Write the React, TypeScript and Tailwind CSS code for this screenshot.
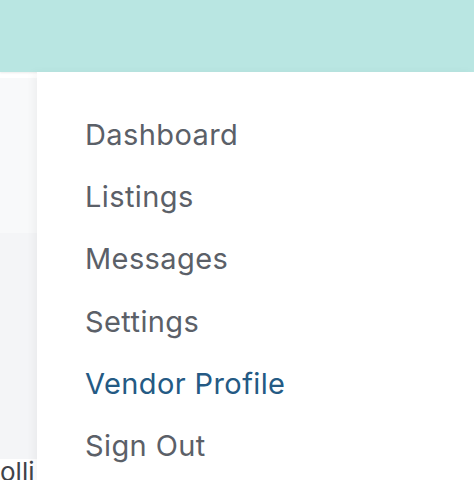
import React from "react";

function App() {
  const links = [
    { name: "Dashboard", active: false },
    { name: "Listings", active: false },
    { name: "Messages", active: false },
    { name: "Settings", active: false },
    { name: "Vendor Profile", active: true },
    { name: "Sign Out", active: false },
  ];

  return (
    <div className="relative h-[480px] w-[474px] overflow-hidden bg-white font-['Inter',sans-serif]">
      <header className="h-[72px] bg-[#b9e6e2] shadow-[0_1px_2px_rgba(0,0,0,0.08)]" />
      <div className="flex">
        {/* page behind the menu */}
        <div className="flex w-[37px] flex-col pt-[6px]">
          <div className="h-[155px] bg-[#f8f9fa]" />
          <div className="h-[226px] bg-[#f4f5f7]" />
          <p className="text-[26px] leading-none text-[#3f4349]">olli</p>
        </div>
        <nav className="flex flex-1 flex-col bg-white pl-[48px] pt-[32px] shadow-[-4px_0_8px_rgba(0,0,0,0.04)]">
          {links.map((link) => (
            <a
              key={link.name}
              href="#"
              className={`h-[62.2px] text-[29px] leading-[62px] tracking-[0.4px] ${
                link.active ? "text-[#245a84]" : "text-[#5b6068]"
              }`}
            >
              {link.name}
            </a>
          ))}
        </nav>
      </div>
    </div>
  );
}

export default App;
